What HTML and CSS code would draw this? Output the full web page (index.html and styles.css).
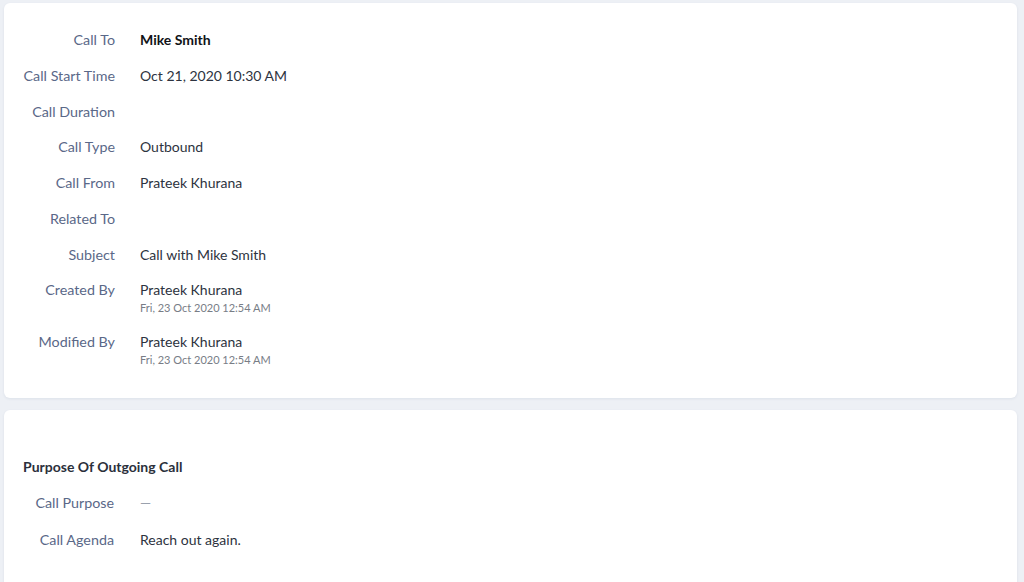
FILE: index.html
```html
<!DOCTYPE html>
<html>
<head>
<meta charset="utf-8">
<link rel="stylesheet" href="styles.css">
</head>
<body>
<div class="page">
  <section class="card card-info">
    <div class="grid">
      <div class="label">Call To</div><div class="value strong">Mike Smith</div>
      <div class="label">Call Start Time</div><div class="value">Oct 21, 2020 10:30 AM</div>
      <div class="label">Call Duration</div><div class="value"></div>
      <div class="label">Call Type</div><div class="value">Outbound</div>
      <div class="label">Call From</div><div class="value">Prateek Khurana</div>
      <div class="label">Related To</div><div class="value"></div>
      <div class="label">Subject</div><div class="value">Call with Mike Smith</div>
      <div class="label">Created By</div><div class="value">Prateek Khurana<div class="sub">Fri, 23 Oct 2020 12:54 AM</div></div>
      <div class="label">Modified By</div><div class="value">Prateek Khurana<div class="sub">Fri, 23 Oct 2020 12:54 AM</div></div>
    </div>
  </section>
  <section class="card card-purpose">
    <h2 class="section-title">Purpose Of Outgoing Call</h2>
    <div class="grid">
      <div class="label">Call Purpose</div><div class="value dash">—</div>
      <div class="label">Call Agenda</div><div class="value">Reach out again.</div>
    </div>
  </section>
</div>
</body>
</html>
```
FILE: styles.css
```css
html, body {
  margin: 0;
  padding: 0;
  background: #edf0f5;
  font-family: Lato, "Open Sans", sans-serif;
  font-size: 14px;
  -webkit-font-smoothing: antialiased;
}
.page {
  display: flex;
  flex-direction: column;
  gap: 12px;
  padding: 3px 7px 0 4px;
}
.card {
  background: #fff;
  border-radius: 6px;
  box-shadow: 0 1px 3px rgba(40, 60, 100, 0.08);
}
.card-info {
  padding: 27px 0 30px 0;
}
.card-purpose {
  padding: 47px 0 40px 0;
}
.grid {
  display: grid;
  grid-template-columns: 111px 1fr;
  column-gap: 25px;
  row-gap: 15.75px;
}
.label {
  text-align: right;
  color: #5a6888;
  font-size: 14.3px;
  line-height: 20px;
}
.value {
  color: #2d3340;
  line-height: 20px;
  min-height: 20px;
}
.value.strong {
  font-weight: 700;
  color: #111317;
}
.value.dash {
  color: #9aa1ad;
}
.sub {
  font-size: 11px;
  line-height: 16px;
  color: #787d86;
}
.section-title {
  margin: 0 0 16px 19px;
  font-size: 14px;
  font-weight: 700;
  line-height: 20px;
  color: #2b303b;
}
.card-purpose .grid {
  grid-template-columns: 110px 1fr;
  column-gap: 26px;
  row-gap: 17px;
}
```
